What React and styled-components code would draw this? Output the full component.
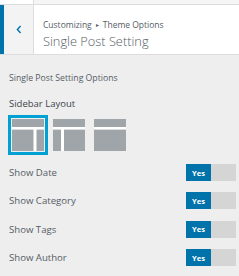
import React from "react";
import styled, { createGlobalStyle } from "styled-components";

const GlobalStyle = createGlobalStyle`
  html, body {
    margin: 0;
    padding: 0;
    background: #eeeeee;
  }
  body {
    font-family: "Open Sans", "Noto Sans", sans-serif;
    color: #555d66;
  }
`;

const Panel = styled.div`
  width: 239px;
  height: 276px;
  overflow: hidden;
  background: #eeeeee;
`;

const TopStrip = styled.div`
  display: flex;
  height: 4px;
  border-bottom: 1px solid #dddddd;
`;

const StripLeft = styled.div`
  width: 33px;
  background: #ffffff;
  border-right: 1px solid #dddddd;
`;

const StripRight = styled.div`
  flex: 1;
  background: #f5f5f5;
`;

const Header = styled.div`
  display: flex;
  height: 49px;
  background: #ffffff;
  border-bottom: 1px solid #dddddd;
`;

const BackButton = styled.button`
  width: 34px;
  padding: 0;
  margin: 0;
  border: none;
  border-left: 4px solid #0073aa;
  border-right: 1px solid #dddddd;
  background: #f3f3f4;
  display: flex;
  align-items: center;
  justify-content: center;
  cursor: pointer;
`;

const HeaderText = styled.div`
  flex: 1;
  padding: 14px 0 0 9px;
  display: flex;
  flex-direction: column;
`;

const Crumbs = styled.div`
  font-size: 8.5px;
  line-height: 12px;
  color: #555d66;
  white-space: nowrap;
`;

const Arrow = styled.span`
  font-size: 6px;
  margin: 0 4px;
  vertical-align: 1px;
`;

const Title = styled.div`
  font-size: 12.8px;
  font-weight: 300;
  line-height: 16px;
  color: #555d66;
  margin-top: 2px;
  white-space: nowrap;
`;

const Content = styled.div`
  padding: 17px 3px 0 9px;
`;

const Description = styled.div`
  font-size: 8.7px;
  line-height: 12px;
  color: #555d66;
  white-space: nowrap;
`;

const ControlTitle = styled.div`
  font-size: 9.5px;
  font-weight: 400;
  line-height: 12px;
  color: #3c434a;
  margin-top: 14px;
`;

const LayoutChoices = styled.div`
  display: flex;
  gap: 1px;
  margin: 5px 0 0 -1px;
`;

const LayoutOption = styled.div`
  width: 32px;
  height: 32px;
  padding: 1px;
  border: 3px solid ${({ selected }) => (selected ? "#00a0d2" : "transparent")};
  cursor: pointer;
`;

const Toggles = styled.div`
  display: flex;
  flex-direction: column;
  gap: 11.4px;
  margin-top: 9px;
`;

const Row = styled.div`
  display: flex;
  align-items: center;
  justify-content: space-between;
  height: 17px;
`;

const Label = styled.span`
  font-size: 9.6px;
  color: #555d66;
`;

const Switch = styled.div`
  display: flex;
  width: 50px;
  height: 17px;
`;

const SwitchOn = styled.div`
  flex: 1;
  background: #0073aa;
  color: #ffffff;
  font-size: 7.6px;
  font-weight: 700;
  display: flex;
  align-items: center;
  justify-content: center;
`;

const SwitchOff = styled.div`
  flex: 1;
  background: #d5d5d5;
`;

const Chevron = () => (
  <svg width="6" height="9" viewBox="0 0 6 9">
    <polyline
      points="4.6,1 1.4,4.5 4.6,8"
      fill="none"
      stroke="#0073aa"
      strokeWidth="1.4"
    />
  </svg>
);

const LayoutIcon = ({ sidebar }) => (
  <svg width="32" height="32" viewBox="0 0 32 32">
    <rect width="32" height="32" fill="#a0a5aa" />
    <rect y="8" width="32" height="2.6" fill="#ffffff" />
    {sidebar === "right" && <rect x="21.5" y="10" width="3" height="22" fill="#ffffff" />}
    {sidebar === "left" && <rect x="8" y="10" width="3" height="22" fill="#ffffff" />}
  </svg>
);

const layouts = ["right", "left", "none"];
const toggles = ["Show Date", "Show Category", "Show Tags", "Show Author"];

export default function App() {
  return (
    <Panel>
      <GlobalStyle />
      <TopStrip>
        <StripLeft />
        <StripRight />
      </TopStrip>
      <Header>
        <BackButton aria-label="Back">
          <Chevron />
        </BackButton>
        <HeaderText>
          <Crumbs>
            Customizing<Arrow>▸</Arrow>Theme Options
          </Crumbs>
          <Title>Single Post Setting</Title>
        </HeaderText>
      </Header>
      <Content>
        <Description>Single Post Setting Options</Description>
        <ControlTitle>Sidebar Layout</ControlTitle>
        <LayoutChoices>
          {layouts.map((l, i) => (
            <LayoutOption key={l} selected={i === 0}>
              <LayoutIcon sidebar={l} />
            </LayoutOption>
          ))}
        </LayoutChoices>
        <Toggles>
          {toggles.map((t) => (
            <Row key={t}>
              <Label>{t}</Label>
              <Switch>
                <SwitchOn>Yes</SwitchOn>
                <SwitchOff />
              </Switch>
            </Row>
          ))}
        </Toggles>
      </Content>
    </Panel>
  );
}
